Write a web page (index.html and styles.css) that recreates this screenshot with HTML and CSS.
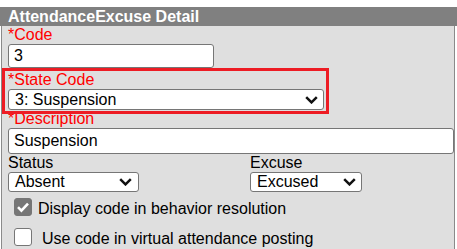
FILE: index.html
```html
<!DOCTYPE html>
<html>
<head>
<meta charset="utf-8">
<link rel="stylesheet" href="styles.css">
</head>
<body>
<div class="hdr">AttendanceExcuse Detail</div>
<div class="panel">
  <div class="lbl req">*Code</div>
  <div class="input code-input">3</div>
  <div class="state">
    <div class="lbl req">*State Code</div>
    <div class="select state-select"><span>3: Suspension</span><svg class="chev" width="13" height="8" viewBox="0 0 13 8"><path d="M1.2 1.2 L6.5 6.4 L11.8 1.2" fill="none" stroke="#111" stroke-width="2.5"/></svg></div>
  </div>
  <div class="lbl req">*Description</div>
  <div class="input desc-input">Suspension</div>
  <div class="row">
    <div class="col status-col">
      <div class="lbl">Status</div>
      <div class="select status-select"><span>Absent</span><svg class="chev" width="13" height="8" viewBox="0 0 13 8"><path d="M1.2 1.2 L6.5 6.4 L11.8 1.2" fill="none" stroke="#111" stroke-width="2.5"/></svg></div>
    </div>
    <div class="col">
      <div class="lbl">Excuse</div>
      <div class="select excuse-select"><span>Excused</span><svg class="chev" width="13" height="8" viewBox="0 0 13 8"><path d="M1.2 1.2 L6.5 6.4 L11.8 1.2" fill="none" stroke="#111" stroke-width="2.5"/></svg></div>
    </div>
  </div>
  <div class="check-row first">
    <span class="cb checked"><svg width="18" height="18" viewBox="0 0 18 18"><path d="M4 9.2 L7.4 12.6 L14 5.6" fill="none" stroke="#fff" stroke-width="2.6"/></svg></span>
    <span class="cb-text">Display code in behavior resolution</span>
  </div>
  <div class="check-row second">
    <span class="cb"></span>
    <span class="cb-text wide">Use code in virtual attendance posting</span>
  </div>
</div>
</body>
</html>
```

FILE: styles.css
```css
html, body {
  margin: 0;
  padding: 0;
  background: #fff;
}
body {
  font-family: "Liberation Sans", Arial, sans-serif;
  font-size: 16px;
  color: #000;
  width: 457px;
  height: 249px;
  overflow: hidden;
}
.hdr {
  margin-top: 7px;
  height: 19px;
  line-height: 19px;
  background: #808080;
  color: #fff;
  font-weight: bold;
  padding-left: 8px;
  width: 449px;
}
.panel {
  margin-left: 1px;
  border-left: 1px solid #8a8a8a;
  border-right: 1px solid #8a8a8a;
  background: #dfdfdf;
  padding-left: 6px;
  box-sizing: border-box;
  width: 454px;
  height: 223px;
}
.lbl {
  height: 18px;
  line-height: 18px;
  white-space: nowrap;
}
.req {
  color: #ff0000;
}
.input {
  background: #fff;
  border: 1px solid #767676;
  border-radius: 3px;
  box-sizing: border-box;
  padding-left: 5px;
  display: flex;
  align-items: center;
}
.code-input {
  width: 206px;
  height: 24px;
  margin-bottom: 3px;
}
.desc-input {
  width: 446px;
  height: 26px;
}
.state {
  position: relative;
  width: 316px;
}
.state::after {
  content: "";
  position: absolute;
  left: -6px;
  right: -5px;
  top: -3px;
  bottom: -4px;
  border: 3px solid #ed1c24;
  pointer-events: none;
}
.select {
  background: #fff;
  border: 1px solid #767676;
  border-radius: 3px;
  box-sizing: border-box;
  display: flex;
  align-items: center;
  justify-content: space-between;
  padding-left: 6px;
}
.chev {
  display: block;
}
.state-select {
  width: 316px;
  height: 21px;
  padding-right: 5px;
}
.row {
  display: flex;
}
.col {
  display: flex;
  flex-direction: column;
}
.status-col {
  width: 242px;
}
.status-select {
  width: 131px;
  height: 20px;
  padding-right: 6px;
}
.excuse-select {
  width: 112px;
  height: 20px;
  padding-right: 5px;
  padding-left: 6px;
}
.check-row {
  display: flex;
  align-items: center;
  padding-left: 6px;
}
.check-row.first {
  margin-top: 6px;
  height: 18px;
}
.check-row.second {
  margin-top: 12px;
  height: 18px;
}
.cb {
  width: 18px;
  height: 18px;
  box-sizing: border-box;
  border: 1px solid #767676;
  border-radius: 3px;
  background: #fff;
  display: block;
  flex: none;
}
.cb.checked {
  background: #767676;
  border-color: #767676;
}
.cb svg {
  display: block;
  margin: -1px;
}
.cb-text {
  margin-left: 6px;
  position: relative;
  top: 2px;
  white-space: nowrap;
}
.cb-text.wide {
  margin-left: 10px;
}
```
